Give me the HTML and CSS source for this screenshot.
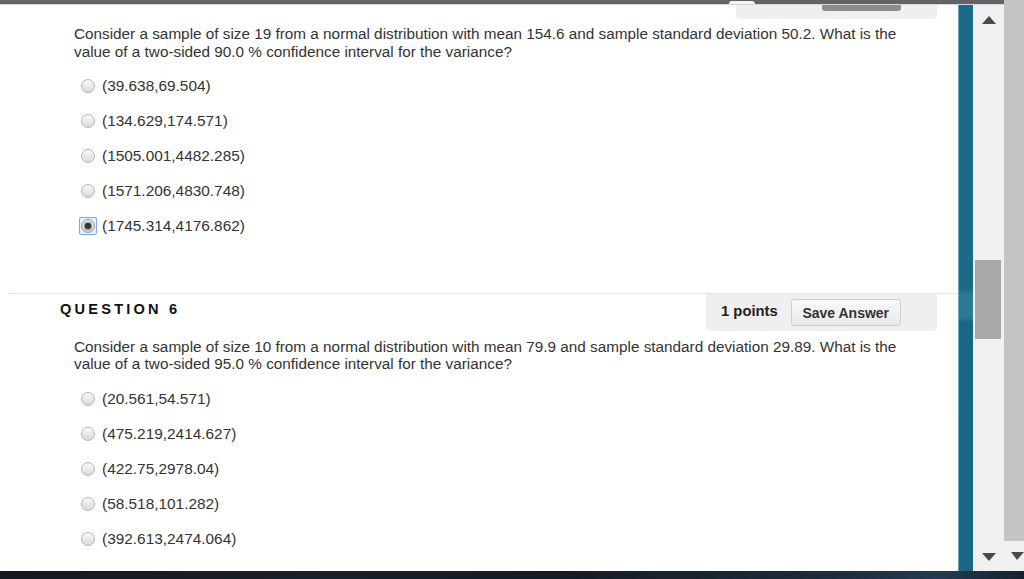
FILE: index.html
```html
<!DOCTYPE html>
<html lang="en">
<head>
    <meta charset="UTF-8">
    <meta name="viewport" content="width=device-width, initial-scale=1.0">
    <title>Take Test</title>
    <link rel="stylesheet" href="styles.css">
</head>
<body>

<div class="screen">
    <div class="main">
        <div class="topbar"><span class="tabPeak"></span></div>
        <div class="bodyRow">
            <div class="content">
                <div class="prevHead">
                    <div class="prevBox"><span class="prevBtn"></span></div>
                </div>

                <div class="question first">
                    <div class="qText">Consider a sample of size 19 from a normal distribution with mean 154.6 and sample standard deviation 50.2. What is the value of a two-sided 90.0 % confidence interval for the variance?</div>
                    <ul class="answers">
                        <li><span class="radio"></span>(39.638,69.504)</li>
                        <li><span class="radio"></span>(134.629,174.571)</li>
                        <li><span class="radio"></span>(1505.001,4482.285)</li>
                        <li><span class="radio"></span>(1571.206,4830.748)</li>
                        <li><span class="focusRing"><span class="radio checked"></span></span>(1745.314,4176.862)</li>
                    </ul>
                </div>

                <div class="qHeader">
                    <h3>QUESTION 6</h3>
                    <div class="pointsBox">
                        <span class="points">1 points</span>
                        <button class="save">Save Answer</button>
                    </div>
                </div>

                <div class="question">
                    <div class="qText">Consider a sample of size 10 from a normal distribution with mean 79.9 and sample standard deviation 29.89. What is the value of a two-sided 95.0 % confidence interval for the variance?</div>
                    <ul class="answers">
                        <li><span class="radio"></span>(20.561,54.571)</li>
                        <li><span class="radio"></span>(475.219,2414.627)</li>
                        <li><span class="radio"></span>(422.75,2978.04)</li>
                        <li><span class="radio"></span>(58.518,101.282)</li>
                        <li><span class="radio"></span>(392.613,2474.064)</li>
                    </ul>
                </div>
            </div>
            <div class="rail"></div>
            <div class="scroll">
                <span class="arrow up"></span>
                <div class="thumb"></div>
                <span class="arrow down"></span>
            </div>
        </div>
    </div>
    <div class="outerScroll">
        <div class="outerTrack"></div>
        <span class="arrow down"></span>
    </div>
</div>
<div class="taskbar"></div>

</body>
</html>
```

FILE: styles.css
```css
body {
    font-family: "Liberation Sans", Arial, sans-serif;
    margin: 0;
    padding: 0;
    overflow: hidden;
    color: #333;
}
.screen {
    display: flex;
    height: 571px;
}
.main {
    width: 1004px;
    display: flex;
    flex-direction: column;
}
.topbar {
    position: relative;
    height: 4px;
    background: #636266;
    border-bottom: 1px solid #d6d6da;
}
.tabPeak {
    position: absolute;
    left: 729px;
    top: 1px;
    width: 26px;
    height: 3px;
    background: #f4f4f4;
    border-radius: 8px 8px 0 0;
}
.bodyRow {
    flex: 1;
    display: flex;
    min-height: 0;
}
.content {
    width: 958px;
    background: #fff;
    overflow: hidden;
}
.prevHead {
    display: flex;
    justify-content: flex-end;
    padding-right: 21px;
}
.prevBox {
    width: 201px;
    height: 14px;
    background: #efefef;
    border-radius: 0 0 4px 4px;
    padding-left: 86px;
    box-sizing: border-box;
}
.prevBtn {
    display: block;
    width: 79px;
    height: 6px;
    background: #8d8d8d;
    border-radius: 0 0 3px 3px;
}

/* question blocks */
.question {
    padding-left: 74px;
    margin-top: 6.5px;
}
.question.first {
    margin-top: 6px;
}
.qText {
    font-size: 15.3px;
    line-height: 17.5px;
    width: 840px;
}
.answers {
    list-style: none;
    margin: 8.5px 0 0;
    padding: 0 0 0 7px;
}
.answers li {
    height: 35px;
    display: flex;
    align-items: center;
    gap: 7px;
    font-size: 15.4px;
}
.radio {
    width: 12px;
    height: 12px;
    border: 1px solid #b4b4b4;
    border-radius: 50%;
    background: linear-gradient(#fafafa, #d9d9d9);
    flex: none;
    display: flex;
    align-items: center;
    justify-content: center;
}
.focusRing {
    display: flex;
    margin: -2px;
    padding: 1px;
    border: 1px solid #7fa8f2;
    border-radius: 2px;
    background: #e6efff;
}
.radio.checked {
    border-color: #9a9a9a;
    background: linear-gradient(#eeeeee, #cfcfcf);
}
.radio.checked::after {
    content: "";
    width: 6px;
    height: 6px;
    border-radius: 50%;
    background: #333;
    box-shadow: 0 0 1px 1px #8a8a8a;
}

/* question header */
.qHeader {
    margin: 49.5px 0 0 9px;
    border-top: 1px solid #e3e3e3;
    display: flex;
    justify-content: space-between;
    height: 37px;
}
.qHeader h3 {
    margin: 0;
    padding: 7px 0 0 51px;
    font-size: 14.6px;
    line-height: 17px;
    letter-spacing: 3.2px;
    color: #111;
}
.pointsBox {
    width: 231px;
    margin-right: 21px;
    background: #efefef;
    border-radius: 0 0 4px 4px;
    display: flex;
    align-items: center;
    padding: 0 0 0 15px;
    box-sizing: border-box;
    gap: 13px;
}
.points {
    font-size: 14.8px;
    font-weight: bold;
    color: #222;
    margin-top: -3px;
}
.save {
    width: 110px;
    height: 27px;
    font-family: "Liberation Sans", Arial, sans-serif;
    font-size: 14px;
    font-weight: bold;
    color: #333;
    background: linear-gradient(#f9f9f9, #e9e9e9);
    border: 1px solid #cfcfcf;
    border-radius: 3px;
    padding: 0;
}

/* scroll bars */
.rail {
    width: 14px;
    background: linear-gradient(#1b6a86 0, #1b6a86 283px, #2c7993 290px, #2c7993 312px, #186683 318px, #196986 100%);
    border-left: 1px solid #6aa5bb;
}
.scroll {
    width: 31px;
    background: #f0f0f0;
    display: flex;
    flex-direction: column;
    align-items: center;
}
.arrow {
    width: 0;
    height: 0;
    border-left: 7px solid transparent;
    border-right: 7px solid transparent;
}
.arrow.up {
    border-bottom: 8px solid #4a4a4a;
    margin-top: 11px;
}
.arrow.down {
    border-top: 8px solid #4a4a4a;
    margin-top: auto;
    margin-bottom: 10px;
}
.thumb {
    width: 26px;
    height: 79px;
    background: #a8a8a8;
    margin-top: 236px;
    align-self: flex-start;
    margin-left: 2px;
}
.outerScroll {
    width: 20px;
    background: #f0f0f0;
    display: flex;
    flex-direction: column;
}
.outerTrack {
    height: 541px;
    background: #c4c4c4;
}
.outerScroll .arrow.down {
    margin: 11px 0 0 7px;
    border-left-width: 6px;
    border-right-width: 7px;
}
.taskbar {
    height: 8px;
    background: linear-gradient(90deg, #141920, #1a2029 30%, #161c25 55%, #1d2b3b 80%, #243a52 92%, #16212e);
}
```
